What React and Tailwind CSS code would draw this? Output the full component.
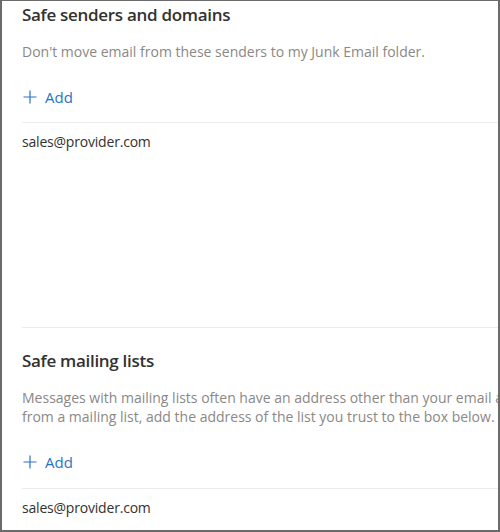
const font = { fontFamily: '"Open Sans", "Noto Sans", sans-serif' };

const AddButton = () => (
  <button className="flex items-center gap-[8px] text-[15px] leading-[20px] text-[#2a72c8]">
    <svg width="14" height="14" viewBox="0 0 14 14" className="ml-[1px]">
      <path d="M7 0.5v13M0.5 7h13" stroke="#2a72c8" strokeWidth="1.2" fill="none" />
    </svg>
    <span>Add</span>
  </button>
);

export default function App() {
  return (
    <div
      className="w-[500px] h-[532px] bg-white border-2 border-t border-[#6b6b6b] overflow-hidden"
      style={font}
    >
      <div className="pl-5 w-[760px] flex flex-col">
        {/* ===== SAFE SENDERS ===== */}
        <h2 className="mt-[2px] text-[17px] leading-[24px] font-semibold tracking-[-0.3px] text-[#323130]">
          Safe senders and domains
        </h2>
        <p className="mt-[15px] text-[14px] leading-[20px] text-[#8a8886]">
          Don't move email from these senders to my Junk Email folder.
        </p>
        <div className="mt-[25px]">
          <AddButton />
        </div>
        <div className="mt-[15px] h-px bg-[#edebe9]" />
        <div className="mt-[9px] text-[14px] leading-[20px] tracking-[-0.2px] text-[#323130]">
          sales@provider.com
        </div>
        <div className="mt-[175px] h-px bg-[#edebe9]" />

        {/* ===== SAFE MAILING LISTS ===== */}
        <h2 className="mt-[21px] text-[17px] leading-[24px] font-semibold tracking-[-0.3px] text-[#323130]">
          Safe mailing lists
        </h2>
        <p className="mt-[15px] text-[14px] leading-[19px] text-[#8a8886] whitespace-nowrap">
          Messages with mailing lists often have an address other than your email address. To make sure you get messages
          <br />
          from a mailing list, add the address of the list you trust to the box below.
        </p>
        <div className="mt-[26px]">
          <AddButton />
        </div>
        <div className="mt-[16px] h-px bg-[#edebe9]" />
        <div className="mt-[9px] text-[14px] leading-[20px] tracking-[-0.2px] text-[#323130]">
          sales@provider.com
        </div>
      </div>
    </div>
  );
}
